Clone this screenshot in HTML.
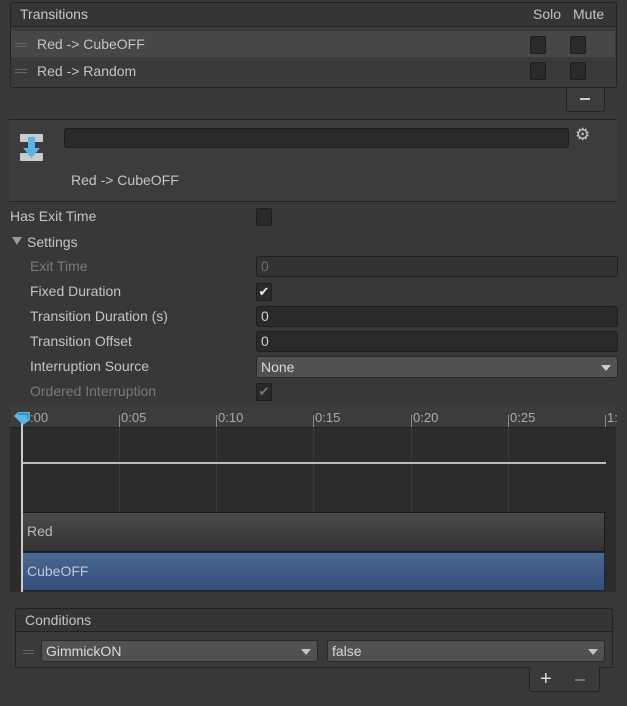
<!DOCTYPE html><html><head><style>
body{margin:0;width:627px;height:706px;background:#383838;font-family:"Liberation Sans",sans-serif;font-size:14px;color:#c4c4c4;position:relative;overflow:hidden}
.a{position:absolute}
.cb{position:absolute;width:16px;height:16px;background:#2a2a2a;border:1px solid #1e1e1e;border-radius:2px;box-sizing:border-box}
.fld{position:absolute;left:256px;width:362px;height:21px;background:#2a2a2a;border:1px solid #1f1f1f;border-radius:3px;box-sizing:border-box;padding-left:4px;line-height:19px;color:#d2d2d2}
.lbl{position:absolute;left:30px}
.tk{position:absolute;top:415px;width:1px;height:12px;background:#8a8a8a}
.gl{position:absolute;top:428px;width:1px;height:84px;background:#3a3a3a}
.tl{position:absolute;top:410px;font-size:13px;color:#aaa}
.dd{position:absolute;background:#515151;border:1px solid #2a2a2a;border-radius:3px;box-sizing:border-box;height:22px;line-height:20px;padding-left:4px;color:#dadada}
.ar{position:absolute;right:6px;top:8px;border-left:5px solid transparent;border-right:5px solid transparent;border-top:6px solid #c4c4c4}
</style></head><body>
<div class="a" style="left:10px;top:2px;width:607px;height:86px;border:1px solid #232323;border-radius:3px;box-sizing:border-box;background:#3a3a3a"></div>
<div class="a" style="left:10px;top:2px;width:607px;height:25px;background:#353535;border:1px solid #232323;box-sizing:border-box;border-radius:3px 3px 0 0"></div>
<div class="a" style="left:20px;top:6px;color:#c8c8c8">Transitions</div>
<div class="a" style="left:533px;top:6px">Solo</div><div class="a" style="left:573px;top:6px">Mute</div>
<div class="a" style="left:11px;top:31px;width:604px;height:26px;background:#474747"></div>
<div class="a" style="left:15px;top:43px;width:12px;height:1px;background:#666;box-shadow:0 3px 0 #666"></div>
<div class="a" style="left:15px;top:69px;width:12px;height:1px;background:#666;box-shadow:0 3px 0 #666"></div>
<div class="a" style="left:37px;top:36px">Red -&gt; CubeOFF</div>
<div class="a" style="left:37px;top:63px">Red -&gt; Random</div>
<div class="cb" style="left:530px;top:36px;height:18px;width:16px"></div><div class="cb" style="left:570px;top:36px;height:18px"></div>
<div class="cb" style="left:530px;top:62px;height:18px"></div><div class="cb" style="left:570px;top:62px;height:18px"></div>
<div class="a" style="left:566px;top:88px;width:39px;height:24px;background:#3c3c3c;border:1px solid #232323;border-top:none;border-radius:0 0 3px 3px;box-sizing:border-box"></div>
<div class="a" style="left:580px;top:98px;width:10px;height:2px;background:#ccc"></div>
<div class="a" style="left:9px;top:119px;width:608px;height:1px;background:#222"></div>
<div class="a" style="left:9px;top:120px;width:608px;height:81px;background:#3c3c3c"></div>
<div class="a" style="left:9px;top:201px;width:608px;height:1px;background:#222"></div>
<svg class="a" style="left:20px;top:134px" width="24" height="28" viewBox="0 0 24 28"><rect x="0" y="0" width="23" height="8" rx="1" fill="#ccc"/><rect x="0" y="19" width="23" height="8" rx="1" fill="#ccc"/><rect x="8" y="3" width="7" height="14" fill="#5ab4e6"/><path d="M3 14 L11.5 24 L20 14 Z" fill="#5ab4e6"/></svg>
<div class="a" style="left:64px;top:128px;width:505px;height:20px;background:#2a2a2a;border:1px solid #1c1c1c;border-radius:3px;box-sizing:border-box"></div>
<div class="a" style="left:575px;top:125px;font-size:17px;color:#c4c4c4">⚙</div>
<div class="a" style="left:71px;top:172px">Red -&gt; CubeOFF</div>
<div class="a" style="left:10px;top:208px">Has Exit Time</div>
<div class="cb" style="left:256px;top:208px;height:18px"></div>
<div class="a" style="left:12px;top:237px;border-left:5px solid transparent;border-right:5px solid transparent;border-top:8px solid #999"></div>
<div class="a" style="left:27px;top:234px">Settings</div>
<div class="lbl" style="top:258px;color:#7a7a7a">Exit Time</div>
<div class="fld" style="top:256px;background:#333;color:#6e6e6e">0</div>
<div class="lbl" style="top:283px">Fixed Duration</div>
<div class="cb" style="left:256px;top:283px;height:18px;color:#eee;font-size:13px;line-height:16px;text-align:center">✔</div>
<div class="lbl" style="top:308px">Transition Duration (s)</div><div class="fld" style="top:306px">0</div>
<div class="lbl" style="top:333px">Transition Offset</div><div class="fld" style="top:331px">0</div>
<div class="lbl" style="top:358px">Interruption Source</div>
<div class="dd" style="left:256px;top:356px;width:362px">None<div class="ar" style="border-top-color:#ccc"></div></div>
<div class="lbl" style="top:383px;color:#7a7a7a">Ordered Interruption</div>
<div class="cb" style="left:256px;top:383px;height:18px;color:#777;font-size:13px;line-height:16px;text-align:center">✔</div>
<div class="a" style="left:10px;top:405px;width:606px;height:187px;background:#2c2c2c"></div>
<div class="a" style="left:10px;top:405px;width:606px;height:23px;background:#3c3c3c"></div>
<div class="a" style="left:10px;top:427px;width:606px;height:1px;background:#222"></div>
<div class="gl" style="left:119px"></div><div class="gl" style="left:216px"></div><div class="gl" style="left:313px"></div><div class="gl" style="left:411px"></div><div class="gl" style="left:508px"></div>
<div class="tk" style="left:119px"></div><div class="tk" style="left:216px"></div><div class="tk" style="left:313px"></div><div class="tk" style="left:411px"></div><div class="tk" style="left:508px"></div><div class="tk" style="left:605px"></div>
<div class="tl" style="left:30px">:00</div><div class="tl" style="left:121px">0:05</div><div class="tl" style="left:218px">0:10</div><div class="tl" style="left:315px">0:15</div><div class="tl" style="left:413px">0:20</div><div class="tl" style="left:510px">0:25</div><div class="tl" style="left:607px">1:</div>
<div class="a" style="left:22px;top:462px;width:584px;height:2px;background:#bbb"></div>
<div class="a" style="left:22px;top:512px;width:583px;height:40px;background:linear-gradient(#4a4a4a,#333);border:1px solid #1a1a1a;box-sizing:border-box"></div>
<div class="a" style="left:27px;top:523px;color:#bbb">Red</div>
<div class="a" style="left:22px;top:552px;width:583px;height:39px;background:linear-gradient(#4a6892,#35507a);border:1px solid #1a2233;box-sizing:border-box"></div>
<div class="a" style="left:27px;top:563px;color:#c0c8d4">CubeOFF</div>
<div class="a" style="left:21px;top:418px;width:2px;height:174px;background:#ccc"></div>
<svg class="a" style="left:12px;top:410px" width="20" height="16"><path d="M2 6 L6 2 H18 V10 L11 15 L6 10 Z" fill="#5ab4e6"/><path d="M6 4H16V9" stroke="#2a6a9a" fill="none"/></svg>
<div class="a" style="left:15px;top:608px;width:598px;height:24px;background:#353535;border:1px solid #232323;border-radius:3px 3px 0 0;box-sizing:border-box"></div>
<div class="a" style="left:25px;top:612px">Conditions</div>
<div class="a" style="left:15px;top:632px;width:598px;height:36px;background:#3a3a3a;border:1px solid #232323;border-top:none;box-sizing:border-box"></div>
<div class="a" style="left:23px;top:650px;width:11px;height:1px;background:#666;box-shadow:0 3px 0 #666"></div>
<div class="dd" style="left:41px;top:640px;width:277px">GimmickON<div class="ar"></div></div>
<div class="dd" style="left:327px;top:640px;width:278px">false<div class="ar"></div></div>
<div class="a" style="left:529px;top:667px;width:71px;height:25px;background:#3a3a3a;border:1px solid #232323;border-top:none;border-radius:0 0 3px 3px;box-sizing:border-box"></div>
<div class="a" style="left:540px;top:668px;font-size:20px;color:#ddd">+</div>
<div class="a" style="left:575px;top:679px;width:10px;height:2px;background:#777"></div>
</body></html>
